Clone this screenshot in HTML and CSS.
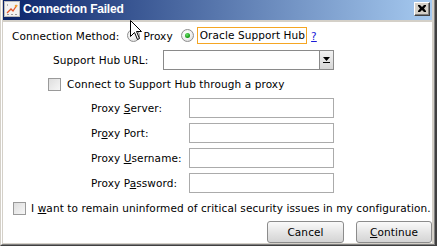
FILE: index.html
```html
<!DOCTYPE html>
<html>
<head>
<meta charset="utf-8">
<link rel="stylesheet" href="styles.css">
</head>
<body>
<div class="window">
  <div class="frame">
    <div class="inner">
      <div class="titlebar">
        <svg class="app-icon" width="16" height="16" viewBox="0 0 16 16">
          <rect x="0.5" y="0.5" width="15" height="15" fill="#f2f2f2" stroke="#bcbcbc"/>
          <path d="M3 12 L7 8 L9 10 L13 4" fill="none" stroke="#e0542a" stroke-width="1.3"/>
          <circle cx="12" cy="5" r="1.3" fill="#f0a030"/>
          <rect x="3" y="13" width="2" height="1" fill="#9a9a9a"/>
          <rect x="7" y="13" width="2" height="1" fill="#9a9a9a"/>
          <rect x="11" y="13" width="2" height="1" fill="#9a9a9a"/>
          <rect x="3" y="3" width="1" height="2" fill="#b0b0b0"/>
        </svg>
        <span class="title">Connection Failed</span>
        <div class="close-btn">
          <svg width="8" height="7" viewBox="0 0 8 7"><path d="M0 0h2l2 2 2-2h2v1L6 3.5 8 6v1H6L4 5 2 7H0V6l2-2.5L0 1z" fill="#000"/></svg>
        </div>
      </div>
      <div class="content">
        <div class="row method">
          <span class="lbl">Connection Method:</span>
          <span class="radio"></span>
          <span class="radio-text">Proxy</span>
          <span class="radio checked"><span class="dot"></span></span>
          <span class="focus-box">Oracle Support Hub</span>
          <a class="help">?</a>
        </div>
        <div class="row url">
          <span class="lbl">Support Hub URL:</span>
          <div class="combo">
            <div class="combo-field"></div>
            <div class="combo-btn">
              <svg width="7" height="6" viewBox="0 0 7 6"><path d="M0 0h7L3.5 4z" fill="#000"/><rect x="0" y="5" width="7" height="1" fill="#000"/></svg>
            </div>
          </div>
        </div>
        <div class="row check-proxy">
          <span class="checkbox"></span>
          <span>Connect to Support Hub through a proxy</span>
        </div>
        <div class="proxy-grid">
          <span class="lbl">Proxy <u>S</u>erver:</span><div class="field"></div>
          <span class="lbl">Pr<u>o</u>xy Port:</span><div class="field"></div>
          <span class="lbl">Proxy <u>U</u>sername:</span><div class="field"></div>
          <span class="lbl">Proxy P<u>a</u>ssword:</span><div class="field"></div>
        </div>
        <div class="row check-uninformed">
          <span class="checkbox"></span>
          <span>I <u>w</u>ant to remain uninformed of critical security issues in my configuration.</span>
        </div>
        <div class="buttons">
          <div class="btn cancel">Cancel</div>
          <div class="btn continue"><u>C</u>ontinue</div>
        </div>
      </div>
    </div>
  </div>
  <svg class="cursor" width="13" height="21" viewBox="0 0 13 21">
    <path d="M0.5 0.5 L0.5 16.5 L4.5 12.5 L7.5 19.5 L9.5 18.5 L6.5 11.5 L11.5 11.5 Z" fill="#fff" stroke="#000" stroke-width="1" stroke-linejoin="miter"/>
  </svg>
</div>
</body>
</html>
```
FILE: styles.css
```css
* { box-sizing: border-box; }
html, body { margin: 0; padding: 0; background: #fff; }
body {
  font-family: "DejaVu Sans", Verdana, sans-serif;
  font-size: 10.5px;
  letter-spacing: 0.1px;
  color: #000;
}
.window {
  position: relative;
  width: 437px;
  height: 246px;
  border-left: 1px solid #d4d0c8;
  border-right: 2px solid #404040;
  border-bottom: 1px solid #404040;
}
.frame {
  height: 100%;
  border-left: 1px solid #ffffff;
  border-right: 1px solid #808080;
  border-bottom: 1px solid #808080;
}
.inner {
  height: 100%;
  border-left: 1px solid #d4d0c8;
  border-right: 2px solid #d4d0c8;
  border-bottom: 1px solid #d4d0c8;
  display: flex;
  flex-direction: column;
}
.titlebar {
  height: 22px;
  flex: none;
  display: flex;
  align-items: center;
  padding: 0 2px 2px 1px;
  background: linear-gradient(to right, #0a246a 0%, #a6caf0 100%);
  border-bottom: 2px solid #d4d0c8;
}
.app-icon { flex: none; display: block; }
.title {
  margin-left: 3px;
  font-family: "Liberation Sans", Arial, sans-serif;
  font-weight: bold;
  font-size: 12px;
  letter-spacing: -0.2px;
  color: #fff;
  flex: 1;
  line-height: 14px;
}
.close-btn {
  width: 16px;
  height: 14px;
  background: #d4d0c8;
  border-top: 1px solid #fff;
  border-left: 1px solid #fff;
  border-right: 1px solid #404040;
  border-bottom: 1px solid #404040;
  box-shadow: inset -1px -1px 0 #808080;
  display: flex;
  align-items: center;
  justify-content: center;
  padding: 0 1px 1px 0;
}
.close-btn svg { display: block; }
.content {
  flex: 1;
  background: #fff;
  display: flex;
  flex-direction: column;
}
.row { display: flex; align-items: center; }
.method {
  height: 17px;
  margin-top: 5px;
  padding-left: 9px;
}
.method .lbl { margin-right: 8px; }
.radio {
  width: 13px;
  height: 13px;
  border-radius: 50%;
  border: 1px solid #8e8e8e;
  background: radial-gradient(circle at 40% 35%, #ffffff 0%, #f0f0f0 50%, #d0d0d0 100%);
  display: flex;
  align-items: center;
  justify-content: center;
  flex: none;
}
.radio-text { margin-left: 3px; margin-right: 8px; }
.dot {
  width: 5px;
  height: 5px;
  border-radius: 50%;
  background: radial-gradient(circle at 40% 35%, #6fe06f 0%, #18a018 60%, #0c700c 100%);
}
.focus-box {
  margin-left: 3px;
  height: 17px;
  border: 1px solid #f5a623;
  padding: 0 1px 0 2px;
  line-height: 15px;
}
.help {
  margin-left: 4px;
  color: #1a1ad8;
  text-decoration: underline;
}
.url {
  margin-top: 6px;
  height: 20px;
  padding-left: 50px;
}
.url .lbl { margin-right: 15px; }
.combo {
  width: 171px;
  height: 20px;
  display: flex;
}
.combo-field {
  flex: 1;
  border: 1px solid #8a8a8a;
  border-right: none;
  background: #fff;
}
.combo-btn {
  width: 15px;
  height: 20px;
  border: 1px solid #8a8a8a;
  background: linear-gradient(#f2f2f2, #d6d6d6);
  display: flex;
  align-items: center;
  justify-content: center;
}
.combo-btn svg { display: block; }
.check-proxy {
  margin-top: 4px;
  height: 20px;
  padding-left: 45px;
}
.checkbox {
  width: 13px;
  height: 13px;
  flex: none;
  border: 1px solid #9a9a9a;
  background: linear-gradient(135deg, #dedede, #f6f6f6);
}
.check-proxy .checkbox { margin-right: 6px; }
.proxy-grid {
  margin-top: 4px;
  padding-left: 88px;
  display: grid;
  grid-template-columns: 98px 145px;
  grid-auto-rows: 20px;
  row-gap: 5px;
  align-items: center;
}
.field {
  height: 20px;
  border: 1px solid #ababab;
  background: #fff;
}
.check-uninformed {
  margin-top: 5px;
  height: 20px;
  padding-left: 10px;
}
.check-uninformed .checkbox { margin-right: 5px; }
.buttons {
  margin-top: 3px;
  display: flex;
  justify-content: flex-end;
  gap: 12px;
}
.btn {
  width: 77px;
  height: 22px;
  border: 1px solid #8c8c8c;
  border-radius: 3px;
  background: linear-gradient(#fafafa, #e2e2e2 60%, #d4d4d4);
  display: flex;
  align-items: center;
  justify-content: center;
}
.continue { width: 76px; }
.cursor {
  position: absolute;
  left: 129px;
  top: 20px;
  display: block;
}
```
